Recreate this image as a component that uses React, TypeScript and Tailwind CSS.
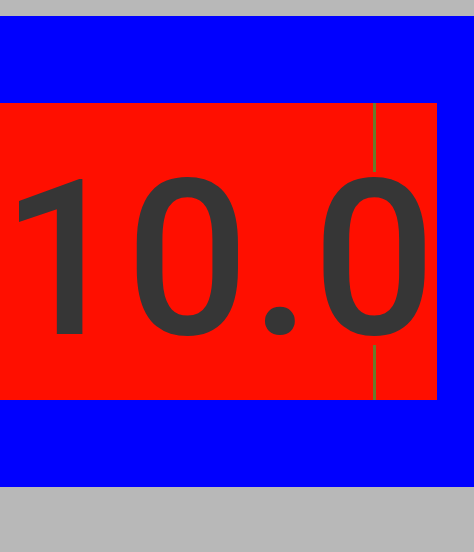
import React from 'react';

const App = () => {
  return (
    <div className="h-[552px] w-[474px] overflow-hidden bg-[#b8b8b8] pt-4">
      <div className="h-[471px] bg-[#0000ff] pt-[87px]">
        <div className="relative h-[297px] w-[437px] bg-[#ff0f00] pt-[69px]">
          {/* guide line behind the number */}
          <div className="absolute left-[373px] top-0 h-full w-[3px] bg-[#687c2c]" />
          <span
            className="relative inline-block h-[173px] bg-[#ff0f00] pl-[1px] text-[217px] leading-[177px] font-medium tracking-[1.5px] text-[#363636]"
            style={{ fontFamily: 'Roboto, sans-serif' }}
          >
            10.0
          </span>
        </div>
      </div>
    </div>
  );
};

export default App;
